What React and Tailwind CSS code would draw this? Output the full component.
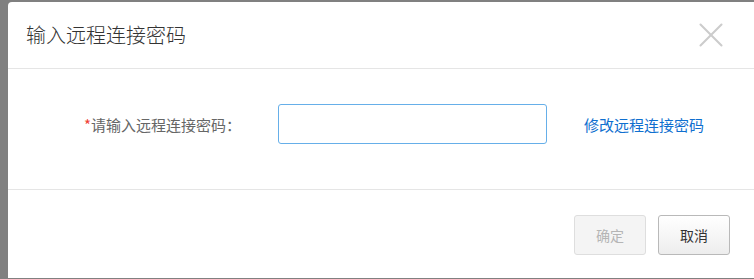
import { X } from "lucide-react";

export default function App() {
  return (
    <div
      className="w-[754px] h-[279px] overflow-hidden bg-[#808080] pl-[8px] pt-[2px]"
      style={{ fontFamily: '"Noto Sans CJK SC", "Noto Sans", sans-serif' }}
    >
      <div className="w-[760px] h-[276px] bg-white rounded-tl-[4px] flex flex-col">
        {/* Header */}
        <div className="h-[67px] flex items-center justify-between pl-[18px] pr-[36px] border-b border-[#e5e5e5]">
          <h1 className="text-[20px] font-light text-[#333] leading-none">输入远程连接密码</h1>
          <X size={42} strokeWidth={1.2} className="text-[#cccccc]" />
        </div>

        {/* Body */}
        <div className="h-[121px] flex items-start pt-[35px] border-b border-[#e5e5e5]">
          <label className="w-[233px] h-[40px] flex items-center justify-end text-[15px] text-[#666] leading-none">
            <span className="text-[#f04134]">*</span>请输入远程连接密码：
          </label>
          <input
            type="password"
            className="ml-[37px] w-[269px] h-[40px] rounded-[3px] border border-[#66afe9] outline-none px-3"
          />
          <a className="ml-[37px] h-[40px] flex items-center text-[15px] text-[#0f6fcf] leading-none cursor-pointer">
            修改远程连接密码
          </a>
        </div>

        {/* Footer */}
        <div className="flex-1 flex items-start justify-end gap-[12px] pt-[25px] pr-[38px]">
          <button
            disabled
            className="w-[72px] h-[40px] rounded-[3px] border border-[#dedede] bg-[#f4f4f4] text-[14px] text-[#b5b5b5]"
          >
            确定
          </button>
          <button className="w-[72px] h-[40px] rounded-[3px] border border-[#b9b9b9] bg-gradient-to-b from-white to-[#ededed] text-[14px] text-[#333]">
            取消
          </button>
        </div>
      </div>
    </div>
  );
}
